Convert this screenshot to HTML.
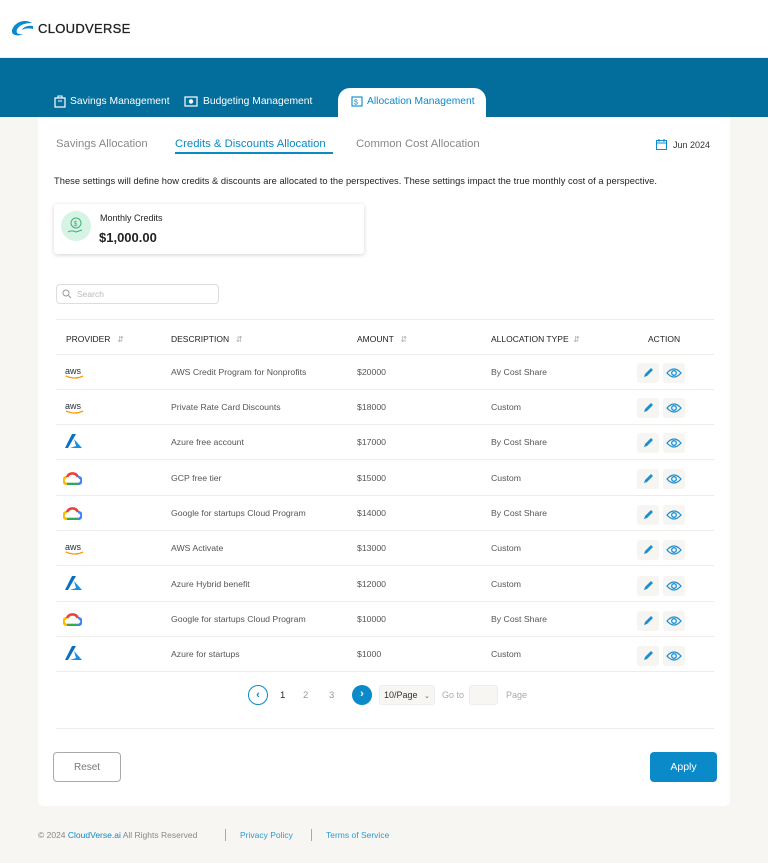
<!DOCTYPE html>
<html><head><meta charset="utf-8"><style>
*{box-sizing:border-box;margin:0;padding:0}
body{width:768px;height:863px;background:#f7f6f2;font-family:"Liberation Sans",sans-serif;position:relative;overflow:hidden;color:#333}
.a{position:absolute;white-space:nowrap}
.hdr{position:absolute;left:0;top:0;width:768px;height:58px;background:#fff;border-bottom:1px solid #eee}
.band{position:absolute;left:0;top:58px;width:768px;height:59px;background:#036e9b}
.card{position:absolute;left:38px;top:117px;width:692px;height:689px;background:#fff;border-radius:0 0 6px 6px}
.tab{color:#fff;font-size:10.3px;top:96px}
.row{position:absolute;left:56px;width:658px;height:35px;border-bottom:1px solid #eeece8;font-size:8.7px;color:#555}
.row span{position:absolute;top:12px}
.btn{position:absolute;width:22px;height:20px;background:#f6f5f2;border-radius:3px;top:8px}
.th{font-size:8.5px;color:#222;top:334px}
.sort{color:#aaa;font-size:8px}
</style></head><body>
<div class="hdr"></div>
<svg class="a" style="left:11px;top:20px" width="24" height="17" viewBox="0 0 24 17"><path d="M21 3 C15 -1 4 1 1 10 C0 15 6 17 12 14 C6 15 4 12 7 8 C10 4 16 3 21 3Z" fill="#0a8ac8"/><path d="M22 6 C17 5 12 7 11 10 C14 8 18 8 22 9Z" fill="#0a8ac8"/></svg>
<div class="a" style="left:38px;top:21px;font-size:13px;color:#222;letter-spacing:0.3px;-webkit-text-stroke:0.3px #222">CLOUDVERSE</div>
<div class="band"></div>
<div class="card"></div>
<div class="a" style="left:338px;top:88px;width:148px;height:30px;background:#fff;border-radius:12px 12px 0 0"></div>
<svg class="a" style="left:54px;top:95px" width="12" height="13"><rect x="1" y="3" width="10" height="9" fill="none" stroke="#fff" stroke-width="1.2"/><path d="M4 3V1h4v2M4 6h4" stroke="#fff" fill="none"/></svg>
<div class="a tab" style="left:70px">Savings Management</div>
<svg class="a" style="left:184px;top:96px" width="14" height="11"><rect x="1" y="1" width="12" height="9" fill="none" stroke="#fff" stroke-width="1.2"/><circle cx="7" cy="5.5" r="2.2" fill="#fff"/></svg>
<div class="a tab" style="left:203px">Budgeting Management</div>
<svg class="a" style="left:351px;top:96px" width="12" height="11"><rect x="1" y="1" width="10" height="9" fill="none" stroke="#0a8ac8" stroke-width="1.1"/><text x="3" y="8.5" font-size="7" fill="#0a8ac8">$</text></svg>
<div class="a tab" style="left:367px;color:#0a8ac8">Allocation Management</div>
<div class="a" style="left:56px;top:138px;font-size:11.3px;color:#888">Savings Allocation</div>
<div class="a" style="left:175px;top:138px;font-size:11.3px;color:#0a8ac8">Credits &amp; Discounts Allocation</div>
<div class="a" style="left:175px;top:152px;width:158px;height:2px;background:#0a8ac8"></div>
<div class="a" style="left:356px;top:138px;font-size:11.3px;color:#888">Common Cost Allocation</div>
<svg class="a" style="left:656px;top:139px" width="11" height="11"><rect x="0.5" y="1.5" width="10" height="9" fill="none" stroke="#0a8ac8"/><path d="M0.5 4h10M3 0v3M8 0v3" stroke="#0a8ac8"/></svg>
<div class="a" style="left:673px;top:140px;font-size:9px;color:#333">Jun 2024</div>
<div class="a" style="left:54px;top:176px;font-size:9.3px;color:#222;letter-spacing:0.05px">These settings will define how credits &amp; discounts are allocated to the perspectives. These settings impact the true monthly cost of a perspective.</div>
<div class="a" style="left:54px;top:204px;width:310px;height:50px;background:#fff;border-radius:3px;box-shadow:0 1px 4px rgba(0,0,0,.18)"></div>
<div class="a" style="left:61px;top:211px;width:30px;height:30px;border-radius:50%;background:#d6f3e3"></div>
<svg class="a" style="left:66px;top:215px" width="20" height="22"><circle cx="10" cy="8" r="5" fill="none" stroke="#3bb07a"/><text x="7.5" y="11" font-size="7" fill="#3bb07a">$</text><path d="M2 17c3-2 6-1 8 0l6-2" fill="none" stroke="#3bb07a"/></svg>
<div class="a" style="left:100px;top:213px;font-size:9px;color:#222">Monthly Credits</div>
<div class="a" style="left:99px;top:230px;font-size:13px;font-weight:bold;color:#222">$1,000.00</div>
<div class="a" style="left:56px;top:284px;width:163px;height:20px;border:1px solid #ddd;border-radius:4px"></div>
<svg class="a" style="left:62px;top:289px" width="10" height="10"><circle cx="4" cy="4" r="3" fill="none" stroke="#999"/><path d="M6.5 6.5L9 9" stroke="#999"/></svg>
<div class="a" style="left:77px;top:289px;font-size:8.5px;color:#bbb">Search</div>
<div class="a" style="left:56px;top:319px;width:658px;height:1px;background:#eeece8"></div>
<div class="a th" style="left:66px">PROVIDER <span class="sort">&nbsp;&nbsp;&#8693;</span></div>
<div class="a th" style="left:171px">DESCRIPTION <span class="sort">&nbsp;&nbsp;&#8693;</span></div>
<div class="a th" style="left:357px">AMOUNT <span class="sort">&nbsp;&nbsp;&#8693;</span></div>
<div class="a th" style="left:491px">ALLOCATION TYPE <span class="sort">&nbsp;&#8693;</span></div>
<div class="a th" style="left:648px">ACTION</div>
<div class="a" style="left:56px;top:354px;width:658px;height:1px;background:#eeece8"></div>

<div id="rows"></div>
<script>
var d=[["aws","AWS Credit Program for Nonprofits","$20000","By Cost Share"],["aws","Private Rate Card Discounts","$18000","Custom"],["az","Azure free account","$17000","By Cost Share"],["g","GCP free tier","$15000","Custom"],["g","Google for startups Cloud Program","$14000","By Cost Share"],["aws","AWS Activate","$13000","Custom"],["az","Azure Hybrid benefit","$12000","Custom"],["g","Google for startups Cloud Program","$10000","By Cost Share"],["az","Azure for startups","$1000","Custom"]];
var tops=[355,390,425,461,496,531,567,602,637];
var h="";
d.forEach(function(r,i){
var ic;
if(r[0]=="aws")ic='<svg style="position:absolute;left:8px;top:11px" width="22" height="14"><text x="1" y="8" font-size="9" fill="#232f3e" font-family="Liberation Sans">aws</text><path d="M2 10q9 4 17 0" stroke="#f90" stroke-width="1.3" fill="none"/></svg>';
else if(r[0]=="az")ic='<svg style="position:absolute;left:9px;top:9px" width="18" height="15"><path d="M7 0h4L3 14H0z" fill="#0a6fc2"/><path d="M9 5l8 9H5l6-2z" fill="#1a8fe0"/></svg>';
else ic='<svg style="position:absolute;left:7px;top:10px" width="19" height="14"><path d="M4 13a3.5 3.5 0 0 1 0-7" stroke="#fbbc04" stroke-width="2.6" fill="none"/><path d="M4 6a6 6 0 0 1 11 0" stroke="#ea4335" stroke-width="2.6" fill="none"/><path d="M15 6a3.5 3.5 0 0 1 0 7" stroke="#4285f4" stroke-width="2.6" fill="none"/><path d="M4 13h11" stroke="#34a853" stroke-width="2.6"/></svg>';
h+='<div class="row" style="top:'+tops[i]+'px">'+ic+'<span style="left:115px">'+r[1]+'</span><span style="left:301px">'+r[2]+'</span><span style="left:435px">'+r[3]+'</span><div class="btn" style="left:581px;top:'+(i<4?8:9)+'px"><svg width="22" height="20"><path d="M7 14l1-3 6-6 2 2-6 6z" fill="#1a8fcf"/></svg></div><div class="btn" style="left:607px;top:'+(i<4?8:9)+'px"><svg width="22" height="20"><path d="M4 10q7-8 14 0q-7 8-14 0z" fill="none" stroke="#1a8fcf" stroke-width="1.3"/><circle cx="11" cy="10" r="2.3" fill="none" stroke="#1a8fcf" stroke-width="1.3"/></svg></div></div>';
});
document.getElementById("rows").innerHTML=h;
</script>
<div class="a" style="left:248px;top:685px;width:20px;height:20px;border:1px solid #0a8ac8;border-radius:50%;color:#0a8ac8;font-size:11px;text-align:center;line-height:18px;font-weight:bold">&#8249;</div>
<div class="a" style="left:280px;top:690px;font-size:9.5px;color:#222">1</div>
<div class="a" style="left:303px;top:690px;font-size:9.5px;color:#999">2</div>
<div class="a" style="left:329px;top:690px;font-size:9.5px;color:#999">3</div>
<div class="a" style="left:352px;top:685px;width:20px;height:20px;background:#0a8ac8;border-radius:50%;color:#fff;font-size:11px;text-align:center;line-height:19px;font-weight:bold">&#8250;</div>
<div class="a" style="left:379px;top:685px;width:56px;height:20px;background:#f7f6f3;border:1px solid #eee;border-radius:3px;font-size:9px;color:#333;padding:4px 4px">10/Page <span style="font-size:7px;color:#666;margin-left:4px">&#8964;</span></div>
<div class="a" style="left:442px;top:690px;font-size:9px;color:#aaa">Go to</div>
<div class="a" style="left:469px;top:685px;width:29px;height:20px;background:#f7f6f3;border:1px solid #eee;border-radius:3px"></div>
<div class="a" style="left:506px;top:690px;font-size:9px;color:#aaa">Page</div>
<div class="a" style="left:56px;top:728px;width:658px;height:1px;background:#eeece8"></div>
<div class="a" style="left:53px;top:752px;width:68px;height:30px;border:1px solid #aaa;border-radius:4px;text-align:center;line-height:29px;font-size:10px;color:#777">Reset</div>
<div class="a" style="left:650px;top:752px;width:67px;height:30px;background:#0a8ac8;border-radius:4px;text-align:center;line-height:30px;font-size:10.5px;color:#fff">Apply</div>
<div class="a" style="left:38px;top:830px;font-size:8.5px;color:#888">© 2024 <span style="color:#0a8ac8">CloudVerse.ai</span> All Rights Reserved</div>
<div class="a" style="left:225px;top:829px;width:1px;height:12px;background:#aaa"></div>
<div class="a" style="left:240px;top:830px;font-size:8.5px;color:#2a9bd4">Privacy Policy</div>
<div class="a" style="left:311px;top:829px;width:1px;height:12px;background:#aaa"></div>
<div class="a" style="left:326px;top:830px;font-size:8.5px;color:#2a9bd4">Terms of Service</div>
</body></html>
